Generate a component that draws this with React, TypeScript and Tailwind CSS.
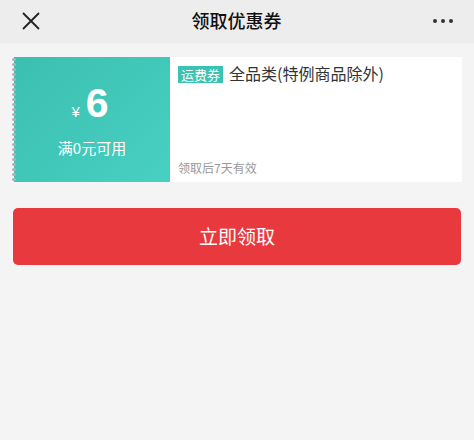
import React from "react";

export default function App() {
  const teeth = Array.from({ length: 25 });
  return (
    <div
      className="w-[474px] h-[440px] bg-[#f4f4f4] flex flex-col"
      style={{ fontFamily: '"Noto Sans CJK SC", "Noto Sans", sans-serif' }}
    >
      <div className="h-[43px] bg-[#ededed] flex items-center justify-between px-[22px] shrink-0">
        <svg width="18" height="18" viewBox="0 0 18 18" className="mt-[-2px]">
          <path d="M1 1 L17 17 M17 1 L1 17" stroke="#222" strokeWidth="1.8" fill="none" />
        </svg>
        <div className="text-[18px] text-[#111] font-medium leading-none mt-[-4px]">领取优惠券</div>
        <div className="flex gap-[4px] mr-[-1px] mt-[-2px]">
          <span className="w-[4px] h-[4px] rounded-full bg-[#333]" />
          <span className="w-[4px] h-[4px] rounded-full bg-[#333]" />
          <span className="w-[4px] h-[4px] rounded-full bg-[#333]" />
        </div>
      </div>

      <div className="px-[13px] pt-[14px]">
        <div className="flex h-[125px] ml-[1px] mr-[-1px]">
          <div className="relative w-[156px] bg-[linear-gradient(135deg,#3bbfb0,#48d0c2)] flex flex-col items-center justify-center text-white">
            <div className="absolute left-[-2px] top-0 bottom-0 flex flex-col justify-around">
              {teeth.map((_, i) => (
                <span key={i} className="block w-[4px] h-[3px] rounded-full bg-[#a9b5b6]" />
              ))}
            </div>
            <div className="flex items-baseline mt-[-2px] ml-[-4px]">
              <span className="text-[15px] mr-[6px]" style={{ fontFamily: '"Liberation Sans", sans-serif' }}>¥</span>
              <span className="text-[41px] font-bold leading-none" style={{ fontFamily: '"Liberation Sans", sans-serif' }}>6</span>
            </div>
            <div className="text-[15px] leading-none mt-[16px]">满0元可用</div>
          </div>
          <div className="flex-1 bg-white flex flex-col justify-between pl-[8px] pr-3 pt-[9px] pb-[8px]">
            <div className="flex items-center">
              <span className="bg-[#3cc2b3] text-white text-[13px] leading-none px-[3px] py-[2px]">运费券</span>
              <span className="text-[16px] text-[#333] leading-none ml-[6px] mt-[-3px]">全品类(特例商品除外)</span>
            </div>
            <div className="text-[12px] text-[#999] leading-none">领取后7天有效</div>
          </div>
        </div>

        <button className="w-[448px] h-[57px] mt-[26px] bg-[#e8393e] rounded-[5px] text-white text-[19px] flex items-center justify-center">
          立即领取
        </button>
      </div>
    </div>
  );
}
